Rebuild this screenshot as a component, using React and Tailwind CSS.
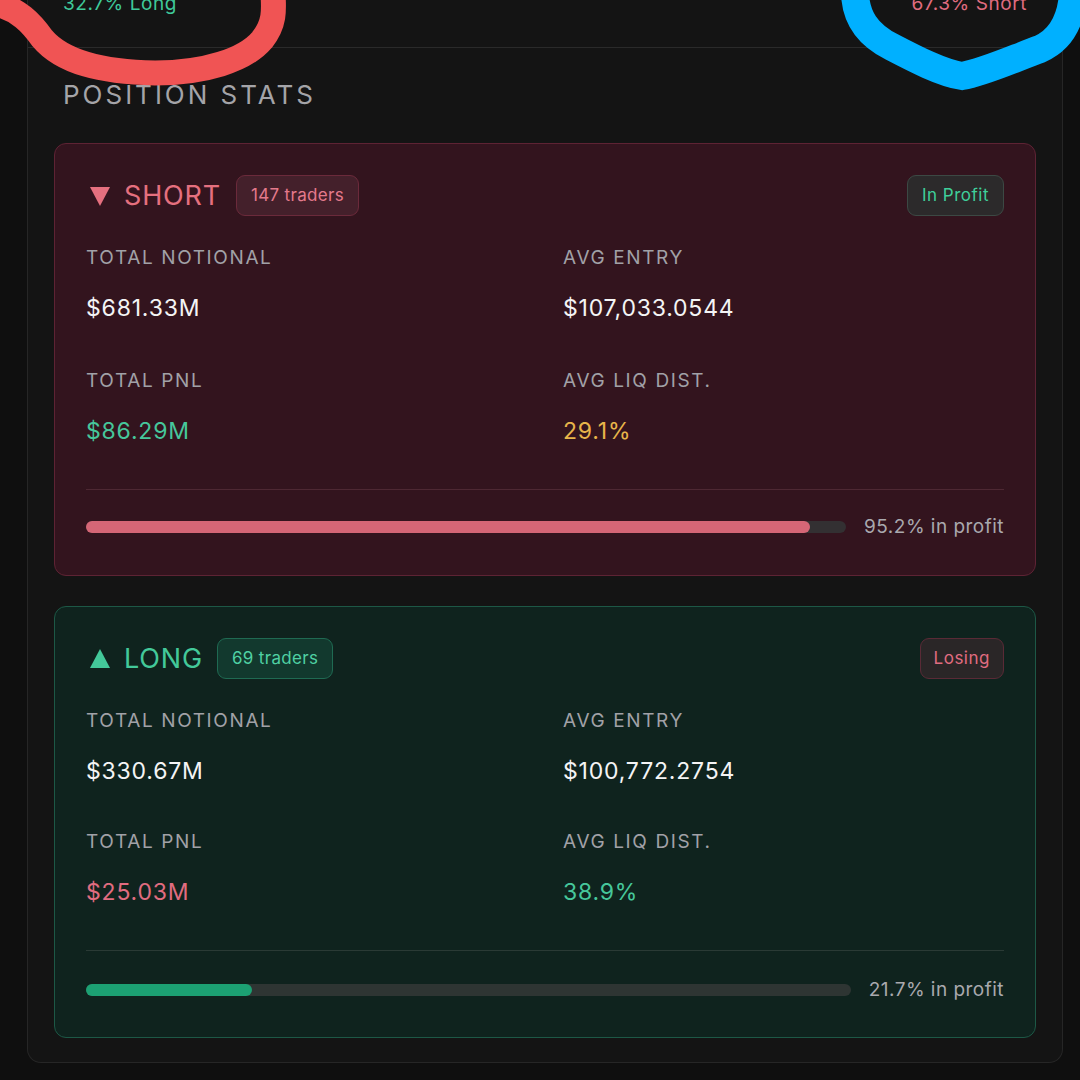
import React from "react";

function Stat({ label, value, color }) {
  return (
    <div className="flex flex-col">
      <div className="text-[19px] leading-[24px] tracking-[0.085em] text-[#a1a1a7]">{label}</div>
      <div className={`mt-[23px] text-[23px] leading-[30px] tracking-[0.035em] ${color}`}>{value}</div>
    </div>
  );
}

function Card({ side }) {
  const short = side === "short";
  return (
    <div
      className={
        short
          ? "rounded-[12px] border border-[#5e2334] bg-[#33141e] px-[31px] pt-[31px] pb-[34px]"
          : "rounded-[12px] border border-[#1d5846] bg-[#0f231e] px-[31px] pt-[31px] pb-[33px]"
      }
    >
      <div className="flex h-[41px] items-center">
        {short ? (
          <svg width="22" height="20" viewBox="0 0 22 20" className="ml-[3px]">
            <polygon points="1,1 21,1 11,20" fill="#e5707f" />
          </svg>
        ) : (
          <svg width="22" height="20" viewBox="0 0 22 20" className="ml-[3px]">
            <polygon points="1,19 21,19 11,0" fill="#43c99a" />
          </svg>
        )}
        <span
          className={
            short
              ? "ml-[13px] text-[27px] leading-[32px] tracking-[0.03em] text-[#e5707f]"
              : "ml-[13px] text-[27px] leading-[32px] tracking-[0.03em] text-[#43c99a]"
          }
        >
          {short ? "SHORT" : "LONG"}
        </span>
        <span
          className={
            short
              ? "ml-[15px] flex h-[41px] items-center rounded-[9px] border border-[#6b2a3b] bg-[#44202b] px-[14px] text-[17px] tracking-[0.02em] text-[#e47a8b]"
              : "ml-[14px] flex h-[41px] items-center rounded-[9px] border border-[#1f6a52] bg-[#12392e] px-[14px] text-[17px] tracking-[0.02em] text-[#4fd0a3]"
          }
        >
          {short ? "147 traders" : "69 traders"}
        </span>
        <span className="flex-1" />
        <span
          className={
            short
              ? "flex h-[41px] items-center rounded-[9px] border border-[#3c4944] bg-[#2c2a2b] px-[14px] text-[17px] tracking-[0.03em] text-[#3fcf9a]"
              : "flex h-[41px] items-center rounded-[9px] border border-[#5a2a36] bg-[#2a2627] px-[13px] text-[17px] tracking-[0.03em] text-[#e06c80]"
          }
        >
          {short ? "In Profit" : "Losing"}
        </span>
      </div>

      <div className={short ? "mt-[30px] grid grid-cols-2 gap-x-[36px] gap-y-[46px]" : "mt-[30px] grid grid-cols-2 gap-x-[36px] gap-y-[44px]"}>
        <Stat label="TOTAL NOTIONAL" value={short ? "$681.33M" : "$330.67M"} color="text-[#f4f4f5]" />
        <Stat label="AVG ENTRY" value={short ? "$107,033.0544" : "$100,772.2754"} color="text-[#f4f4f5]" />
        <Stat
          label="TOTAL PNL"
          value={short ? "$86.29M" : "$25.03M"}
          color={short ? "text-[#46c79b]" : "text-[#e06c80]"}
        />
        <Stat
          label="AVG LIQ DIST."
          value={short ? "29.1%" : "38.9%"}
          color={short ? "text-[#e8b54a]" : "text-[#46c79b]"}
        />
      </div>

      <div className={short ? "mt-[43px] h-px bg-[#4e2833]" : "mt-[43px] h-px bg-[#2a3a35]"} />

      <div className={short ? "mt-[23px] flex h-[28px] items-center" : "mt-[25px] flex h-[28px] items-center"}>
        <div className={short ? "h-[12px] flex-1 rounded-full bg-[#333032]" : "h-[12px] flex-1 rounded-full bg-[#2e3533]"}>
          <div
            className={short ? "h-full rounded-full bg-[#d56676]" : "h-full rounded-full bg-[#1ca173]"}
            style={{ width: short ? "95.2%" : "21.7%" }}
          />
        </div>
        <span className="ml-[18px] text-[19px] leading-[28px] tracking-[0.025em] text-[#a9a9ae]">
          {short ? "95.2% in profit" : "21.7% in profit"}
        </span>
      </div>
    </div>
  );
}

export default function App() {
  return (
    <div
      className="relative h-[1080px] w-[1080px] overflow-hidden bg-[#0f0f0f]"
      style={{ fontFamily: "Inter, 'Noto Sans', sans-serif" }}
    >
      <div className="ml-[27px] w-[1036px] rounded-b-[14px] border-x border-b border-[#262626] bg-[#141414] pb-[24px]">
        <div className="flex h-[48px] items-start justify-between border-b border-[#2a2a2a] px-[35px]">
          <span className="-mt-[9px] text-[19px] leading-[26px] tracking-[0.03em] text-[#3fc99a]">32.7% Long</span>
          <span className="-mt-[9px] text-[19px] leading-[26px] tracking-[0.03em] text-[#e06c80]">67.3% Short</span>
        </div>
        <div className="px-[35px] pt-[30px] text-[26px] leading-[34px] tracking-[0.115em] text-[#a4a4a8]">
          POSITION STATS
        </div>
        <div className="flex flex-col gap-[30px] px-[26px] pt-[31px]">
          <Card side="short" />
          <Card side="long" />
        </div>
      </div>

      <svg className="pointer-events-none absolute left-0 top-0" width="1080" height="120" viewBox="0 0 1080 120">
        <path
          d="M -6 4 C 18 8, 32 24, 42 38 C 62 62, 100 72, 155 73 C 205 73, 245 60, 262 40 C 275 24, 274 10, 273 -6"
          fill="none"
          stroke="#f05454"
          strokeWidth="25"
          strokeLinecap="round"
        />
        <path
          d="M 855 -6 C 856 16, 866 34, 892 47 C 915 59, 942 73, 962 76 C 985 72, 1015 58, 1040 49 C 1060 40, 1071 22, 1073 -6"
          fill="none"
          stroke="#00b0ff"
          strokeWidth="28"
          strokeLinecap="round"
        />
      </svg>
    </div>
  );
}
